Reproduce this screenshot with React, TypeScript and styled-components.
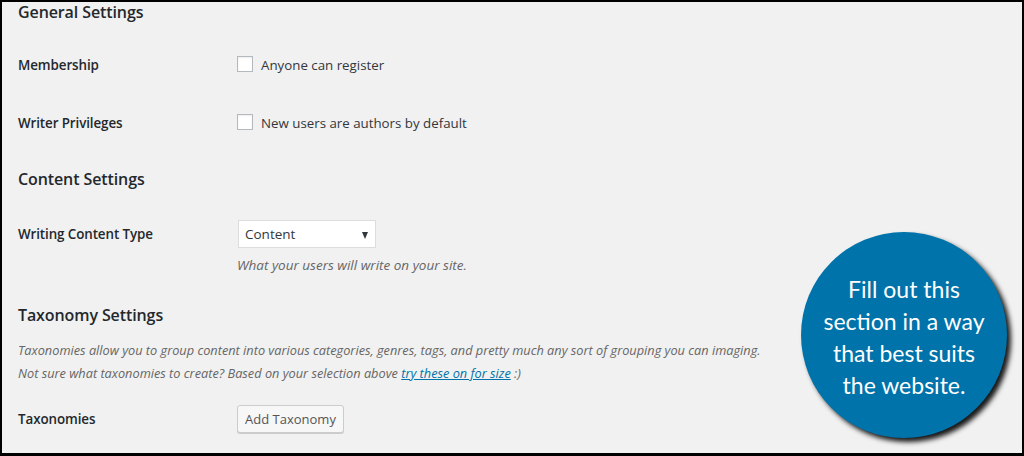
import React from "react";
import styled, { createGlobalStyle } from "styled-components";

const GlobalStyle = createGlobalStyle`
  html, body {
    margin: 0;
    padding: 0;
    background: #000;
  }
  * {
    box-sizing: border-box;
  }
`;

const Frame = styled.div`
  position: relative;
  width: 1024px;
  height: 456px;
  overflow: hidden;
  background: #f1f1f1;
  border-style: solid;
  border-color: #000;
  border-width: 2px 2px 3px 2px;
  padding: 0 16px;
  font-family: "Open Sans", "Liberation Sans", sans-serif;
  color: #23282d;
`;

const Heading = styled.h2<{ $top?: number }>`
  margin: ${(p) => p.$top ?? 0}px 0 0;
  font-size: 16px;
  line-height: 20px;
  font-weight: 600;
  letter-spacing: -0.1px;
`;

const Row = styled.div<{ $top?: number; $height?: number }>`
  display: grid;
  grid-template-columns: 219px 1fr;
  align-items: ${(p) => (p.$height ? "center" : "start")};
  margin-top: ${(p) => p.$top ?? 0}px;
  height: ${(p) => (p.$height ? `${p.$height}px` : "auto")};
`;

const Label = styled.div<{ $lh?: number }>`
  font-size: 13.4px;
  font-weight: 600;
  line-height: ${(p) => p.$lh ?? 20}px;
  letter-spacing: -0.1px;
`;

const Control = styled.div`
  display: flex;
  flex-direction: column;
`;

const CheckLabel = styled.label`
  display: flex;
  align-items: center;
  gap: 8px;
  font-size: 13.3px;
  line-height: 20px;
  color: #32373c;
`;

const Box = styled.span`
  width: 16px;
  height: 16px;
  background: #fff;
  border: 1px solid #b4b9be;
  box-shadow: inset 0 1px 2px rgba(0, 0, 0, 0.07);
  margin-top: -2px;
`;

const SelectBox = styled.div`
  position: relative;
  width: 138px;
  height: 28px;
  margin-left: 1px;
  background: #fff;
  border: 1px solid #ddd;
  font-size: 13.5px;
  line-height: 26px;
  padding-left: 6px;
  color: #32373c;
`;

const Arrow = styled.span`
  position: absolute;
  right: 7px;
  top: 11px;
  width: 0;
  height: 0;
  border-left: 3.5px solid transparent;
  border-right: 3.5px solid transparent;
  border-top: 7px solid #32373c;
`;

const Hint = styled.p<{ $top?: number; $size?: number; $lh?: number }>`
  margin: ${(p) => p.$top ?? 0}px 0 0;
  font-style: italic;
  font-size: ${(p) => p.$size ?? 13}px;
  line-height: ${(p) => p.$lh ?? 20}px;
  color: #666;
`;

const Link = styled.a`
  color: #0073aa;
  text-decoration: underline;
`;

const Button = styled.button`
  width: 107px;
  height: 28px;
  padding: 0;
  background: #f7f7f7;
  border: 1px solid #ccc;
  border-radius: 3px;
  box-shadow: 0 1px 0 #ccc;
  font-family: inherit;
  font-size: 13px;
  color: #555;
`;

const Bubble = styled.div`
  position: absolute;
  left: 799px;
  top: 230px;
  width: 206px;
  height: 206px;
  border-radius: 50%;
  background: #0073aa;
  box-shadow: 4px 4px 5px rgba(0, 0, 0, 0.9);
  display: flex;
  align-items: center;
  justify-content: center;
  text-align: center;
  color: #fff;
  font-family: "Lato", "Open Sans", sans-serif;
  font-size: 23px;
  line-height: 32px;
  padding-top: 4px;
`;

export default function App() {
  return (
    <>
      <GlobalStyle />
      <Frame>
        <Heading>General Settings</Heading>
        <Row $top={14} $height={58}>
          <Label>Membership</Label>
          <CheckLabel>
            <Box />
            Anyone can register
          </CheckLabel>
        </Row>
        <Row $height={58}>
          <Label>Writer Privileges</Label>
          <CheckLabel>
            <Box />
            New users are authors by default
          </CheckLabel>
        </Row>

        <Heading $top={17}>Content Settings</Heading>
        <Row $top={31}>
          <Label $lh={28}>Writing Content Type</Label>
          <Control>
            <SelectBox>
              Content
              <Arrow />
            </SelectBox>
            <Hint $top={7} $size={13.5}>
              What your users will write on your site.
            </Hint>
          </Control>
        </Row>

        <Heading $top={30}>Taxonomy Settings</Heading>
        <Hint $top={14} $size={12.75} $lh={23}>
          Taxonomies allow you to group content into various categories, genres, tags, and pretty much any sort of grouping you can imaging.
          <br />
          Not sure what taxonomies to create? Based on your selection above <Link href="#">try these on for size</Link> :)
        </Hint>
        <Row $top={20}>
          <Label $lh={28}>Taxonomies</Label>
          <div>
            <Button>Add Taxonomy</Button>
          </div>
        </Row>

        <Bubble>
          Fill out this
          <br />
          section in a way
          <br />
          that best suits
          <br />
          the website.
        </Bubble>
      </Frame>
    </>
  );
}
